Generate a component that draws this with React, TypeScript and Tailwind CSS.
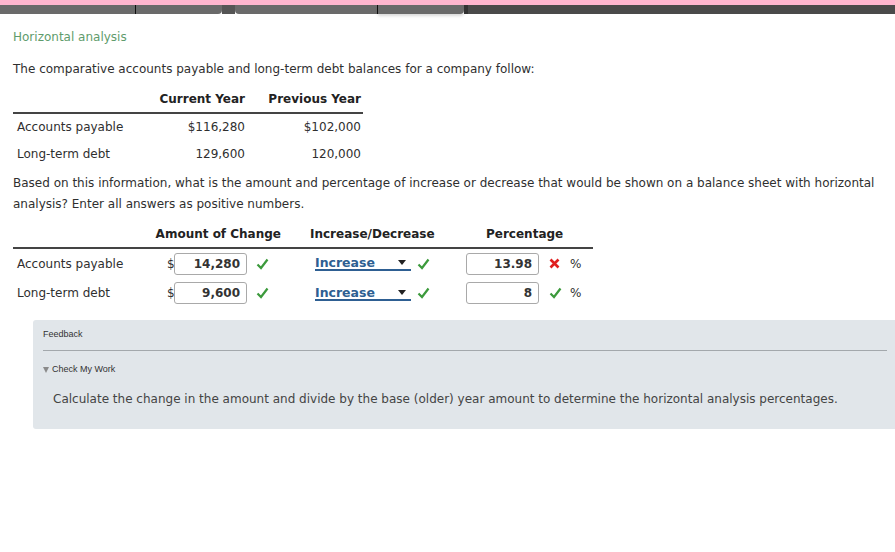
const Check = () => (
  <svg width="13" height="12" viewBox="0 0 13 12" className="inline-block">
    <path d="M1.5 6.5 L5 10 L11.5 1.5" fill="none" stroke="#3c9a3c" strokeWidth="2.2" />
  </svg>
);

const Cross = () => (
  <svg width="11" height="11" viewBox="0 0 11 11" className="inline-block">
    <path d="M1.5 1.5 L9.5 9.5 M9.5 1.5 L1.5 9.5" fill="none" stroke="#e02020" strokeWidth="2.6" />
  </svg>
);

const NumBox = ({ value }: { value: string }) => (
  <div className="flex h-[22px] w-[73px] items-center justify-end rounded-[3px] border border-[#a9a9a9] bg-white pr-[6px] font-bold text-[#333]">
    {value}
  </div>
);

const Choice = () => (
  <div className="flex w-[96px] items-center border-b-2 border-[#2e5f92] leading-[13px]">
    <span className="flex-1 text-[12.5px] font-bold text-[#2e5f92]">Increase</span>
    <svg width="8" height="5" viewBox="0 0 8 5" className="mr-[5px]">
      <path d="M0 0 H8 L4 5 Z" fill="#222" />
    </svg>
  </div>
);

const rows = [
  { label: "Accounts payable", amount: "14,280", pct: "13.98", pctOk: false },
  { label: "Long-term debt", amount: "9,600", pct: "8", pctOk: true },
];

export default function App() {
  return (
    <div className="h-[552px] w-[895px] overflow-hidden bg-white font-['DejaVu_Sans',Verdana,sans-serif] text-[12px] text-[#2f2f2f]">
      <div className="h-[5px] bg-[#ffb6cf]" />
      <div className="flex h-[9px]">
        <div className="w-[135px] bg-[#6a6a6a]" />
        <div className="w-px bg-[#111]" />
        <div className="w-[86px] rounded-br-[4px] bg-[#6a6a6a]" />
        <div className="w-[13px] bg-[#555]" />
        <div className="w-[142px] rounded-bl-[4px] bg-[#6a6a6a]" />
        <div className="w-px bg-[#111]" />
        <div className="w-[86px] rounded-br-[4px] bg-[#6a6a6a] shadow-[0_2px_3px_rgba(0,0,0,0.15)]" />
        <div className="w-[4px] bg-[#333]" />
        <div className="flex-1 bg-[#4a4a4a]" />
      </div>

      <div className="px-[13px]">
        <div className="mt-[15px] leading-[16px] text-[#5f9c6c]">Horizontal analysis</div>
        <p className="mt-[16px] leading-[16px]">
          The comparative accounts payable and long-term debt balances for a company follow:
        </p>

        <table className="mt-[13px] w-[350px] table-fixed border-collapse">
          <colgroup>
            <col className="w-[140px]" />
            <col className="w-[96px]" />
            <col className="w-[114px]" />
          </colgroup>
          <thead>
            <tr className="h-[23px] border-b-2 border-[#444]">
              <th />
              <th className="pr-[4px] text-right align-top font-bold text-[#222]">Current Year</th>
              <th className="pr-[2px] text-right align-top font-bold text-[#222]">Previous Year</th>
            </tr>
          </thead>
          <tbody>
            <tr className="h-[27px]">
              <td className="pl-[4px]">Accounts payable</td>
              <td className="pr-[4px] text-right">$116,280</td>
              <td className="pr-[2px] text-right">$102,000</td>
            </tr>
            <tr className="h-[27px]">
              <td className="pl-[4px]">Long-term debt</td>
              <td className="pr-[4px] text-right">129,600</td>
              <td className="pr-[2px] text-right">120,000</td>
            </tr>
          </tbody>
        </table>

        <p className="mt-[6px] leading-[21px]">
          Based on this information, what is the amount and percentage of increase or decrease that would be shown on a balance sheet with horizontal analysis? Enter all answers as positive numbers.
        </p>

        <table className="mt-[10px] w-[580px] table-fixed border-collapse">
          <colgroup>
            <col className="w-[140px]" />
            <col className="w-[146px]" />
            <col className="w-[160px]" />
            <col className="w-[134px]" />
          </colgroup>
          <thead>
            <tr className="h-[23px] border-b-2 border-[#444]">
              <th />
              <th className="pr-[18px] text-right align-top font-bold text-[#222]">Amount of Change</th>
              <th className="pl-[11px] text-left align-top font-bold text-[#222]">Increase/Decrease</th>
              <th className="pl-[27px] text-left align-top font-bold text-[#222]">Percentage</th>
            </tr>
          </thead>
          <tbody>
            {rows.map((r) => (
              <tr key={r.label} className="h-[30px]">
                <td className="pl-[4px]">{r.label}</td>
                <td>
                  <div className="flex items-center pl-[14px]">
                    <span className="w-[7px]">$</span>
                    <NumBox value={r.amount} />
                    <span className="ml-[9px] flex"><Check /></span>
                  </div>
                </td>
                <td>
                  <div className="flex items-center pl-[16px]">
                    <Choice />
                    <span className="ml-[6px] flex"><Check /></span>
                  </div>
                </td>
                <td>
                  <div className="flex items-center pl-[7px]">
                    <NumBox value={r.pct} />
                    <span className="ml-[10px] flex w-[13px]">{r.pctOk ? <Check /> : <Cross />}</span>
                    <span className="ml-[8px]">%</span>
                  </div>
                </td>
              </tr>
            ))}
          </tbody>
        </table>
      </div>

      <div className="ml-[33px] mt-[12px] h-[109px] rounded-l-[3px] bg-[#e1e6ea] pl-[10px] pr-[8px] pt-[9px]">
        <div className="font-['Liberation_Sans',Arial,sans-serif] text-[9px] leading-[11px] text-[#333]">Feedback</div>
        <div className="mt-[10px] h-px bg-[#a3a8ac]" />
        <div className="mt-[13px] flex items-center font-['Liberation_Sans',Arial,sans-serif] text-[9px] leading-[11px] text-[#333]">
          <svg width="6" height="6" viewBox="0 0 6 6" className="mr-[3px]">
            <path d="M0 0 H6 L3 6 Z" fill="#8a8a8a" />
          </svg>
          Check My Work
        </div>
        <p className="mt-[16px] pl-[10px] leading-[16px] text-[#444]">
          Calculate the change in the amount and divide by the base (older) year amount to determine the horizontal analysis percentages.
        </p>
      </div>
    </div>
  );
}
